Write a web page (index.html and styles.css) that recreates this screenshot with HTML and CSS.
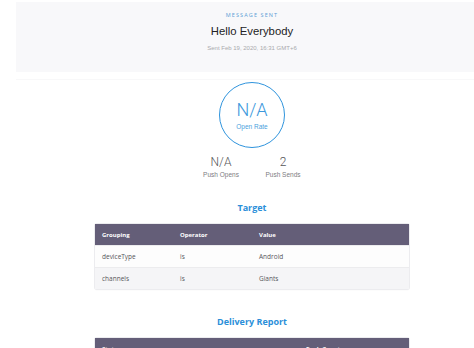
FILE: index.html
```html
<!DOCTYPE html>
<html>
<head>
<meta charset="utf-8">
<link rel="stylesheet" href="styles.css">
</head>
<body>
<div class="page">
  <header class="hero">
    <div class="eyebrow">MESSAGE SENT</div>
    <h1 class="title">Hello Everybody</h1>
    <div class="sent">Sent Feb 19, 2020, 16:31 GMT+6</div>
  </header>
  <div class="rule"></div>
  <div class="ring">
    <div class="ring-value">N/A</div>
    <div class="ring-label">Open Rate</div>
  </div>
  <div class="stats">
    <div class="stat">
      <div class="stat-value">N/A</div>
      <div class="stat-label">Push Opens</div>
    </div>
    <div class="stat">
      <div class="stat-value">2</div>
      <div class="stat-label">Push Sends</div>
    </div>
  </div>
  <h2 class="section-title">Target</h2>
  <table class="grid">
    <thead>
      <tr><th class="c1">Grouping</th><th class="c2">Operator</th><th>Value</th></tr>
    </thead>
    <tbody>
      <tr><td>deviceType</td><td>is</td><td>Android</td></tr>
      <tr class="alt"><td>channels</td><td>is</td><td>Giants</td></tr>
    </tbody>
  </table>
  <h2 class="section-title second">Delivery Report</h2>
  <table class="grid">
    <thead>
      <tr><th class="wide">Status</th><th>Push Count</th></tr>
    </thead>
  </table>
</div>
</body>
</html>
```

FILE: styles.css
```css
html, body {
  margin: 0;
  padding: 0;
  background: #ffffff;
  overflow: hidden;
}
body {
  font-family: "Liberation Sans", Arial, sans-serif;
}
.page {
  width: 472px;
  margin-left: 16px;
  padding-top: 2px;
}
.hero {
  height: 70px;
  box-sizing: border-box;
  background: #f8f8fa;
  padding-top: 9px;
  text-align: center;
}
.eyebrow {
  font-size: 5.5px;
  line-height: 8px;
  letter-spacing: 1.1px;
  color: #5d9fd6;
  font-family: "Open Sans", sans-serif;
}
.title {
  margin: 4px 0 0;
  font-size: 11.3px;
  line-height: 16px;
  font-weight: 400;
  color: #222224;
}
.sent {
  margin-top: 5px;
  font-size: 6px;
  line-height: 8px;
  color: #a9a9ad;
}
.rule {
  height: 1px;
  background: #f8f8f9;
  margin-top: 7px;
}
.ring {
  width: 66px;
  height: 66px;
  box-sizing: border-box;
  margin: 2px auto 0;
  border: 1.5px solid #2f94dd;
  border-radius: 50%;
  padding-top: 17px;
  text-align: center;
  color: #3c98dc;
  font-family: Roboto, sans-serif;
}
.ring-value {
  font-size: 18px;
  line-height: 20px;
  font-weight: 300;
}
.ring-label {
  margin-top: 3px;
  font-size: 6.5px;
  line-height: 8px;
  font-family: "Liberation Sans", sans-serif;
  color: #4a9fdd;
}
.stats {
  display: flex;
  justify-content: center;
  margin-top: 7px;
}
.stat {
  width: 62px;
  text-align: center;
}
.stat-value {
  font-family: Roboto, sans-serif;
  font-weight: 300;
  font-size: 12px;
  line-height: 14px;
  color: #555558;
}
.stat-label {
  margin-top: 2px;
  font-size: 6.5px;
  line-height: 8px;
  color: #7d7d82;
}
.section-title {
  margin: 23px 0 0;
  text-align: center;
  font-family: "Open Sans", sans-serif;
  font-weight: 700;
  font-size: 9px;
  line-height: 12px;
  color: #2b8fd9;
}
.section-title.second {
  margin-top: 27px;
}
.grid {
  width: 314px;
  margin: 10px auto 0;
  border-collapse: collapse;
  font-family: "Open Sans", sans-serif;
  font-size: 6.5px;
  box-shadow: 0 0 0 1px #ececef, 0 1px 2px rgba(0,0,0,0.06);
  border-radius: 2px;
}
.grid th {
  background: #645e78;
  color: #ffffff;
  font-weight: 700;
  text-align: left;
  height: 21px;
  padding: 0 0 0 7px;
  font-size: 6px;
}
.grid th.c1 { width: 71px; }
.grid th.c2 { width: 72px; }
.grid th.wide { width: 197px; }
.grid td {
  height: 21px;
  padding: 0 0 0 7px;
  color: #56565a;
  background: #fdfdfd;
  border-top: 1px solid #ececee;
}
.grid tr.alt td {
  background: #f5f5f7;
}
```
